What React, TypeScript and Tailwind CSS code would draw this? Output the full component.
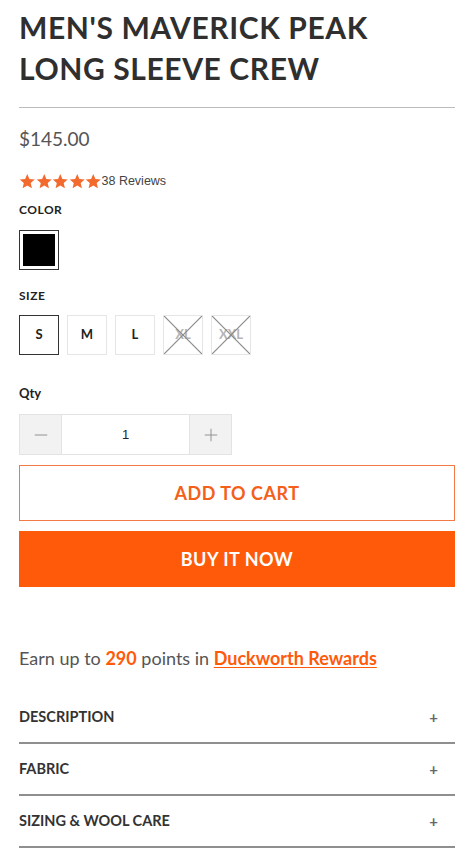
import { Minus, Plus } from 'lucide-react'

const sizes = [
  { label: 'S', selected: true, soldOut: false },
  { label: 'M', selected: false, soldOut: false },
  { label: 'L', selected: false, soldOut: false },
  { label: 'XL', selected: false, soldOut: true },
  { label: 'XXL', selected: false, soldOut: true },
]

const sections = ['DESCRIPTION', 'FABRIC', 'SIZING & WOOL CARE']

function Star() {
  return (
    <svg viewBox="0 0 24 24" className="w-[16.5px] h-[16.5px]" fill="#f26a2e">
      <path d="M12 1.5l3.1 7.2 7.8.7-5.9 5.1 1.8 7.6L12 18.1l-6.8 4 1.8-7.6-5.9-5.1 7.8-.7z" />
    </svg>
  )
}

export default function App() {
  return (
    <div className="w-[474px] min-h-[862px] bg-white px-[19px] font-['Lato',_sans-serif] text-[#333]">
      {/* Title */}
      <h1 className="pt-[7px] text-[30px] leading-[41px] font-bold tracking-[0.6px] text-[#2f2f2f]">
        MEN'S MAVERICK PEAK<br />LONG SLEEVE CREW
      </h1>
      <div className="mt-[18px] h-px bg-[#bdbdbd]" />

      {/* Price + reviews */}
      <p className="mt-[19px] text-[19px] leading-[24px] text-[#555]">$145.00</p>
      <div className="mt-[22px] flex items-center h-4">
        <div className="flex">
          <Star /><Star /><Star /><Star /><Star />
        </div>
        <span className="font-['Liberation_Sans',_sans-serif] text-[12.5px] text-[#444]">38 Reviews</span>
      </div>

      {/* Color */}
      <p className="mt-[13px] text-[12px] leading-4 font-bold tracking-[0.5px] text-[#222]">COLOR</p>
      <div className="mt-[12px] w-10 h-10 border border-[#333] p-[3px]">
        <div className="w-full h-full bg-black" />
      </div>

      {/* Size */}
      <p className="mt-[18px] text-[12px] leading-4 font-bold tracking-[0.5px] text-[#222]">SIZE</p>
      <div className="mt-[11px] flex gap-2">
        {sizes.map(s => (
          <div
            key={s.label}
            className={
              'relative min-w-10 h-10 px-1 flex items-center justify-center text-[13px] font-bold border ' +
              (s.selected ? 'border-[#333] text-[#222]' : 'border-[#e6e6e6] text-[#222]') +
              (s.soldOut ? ' text-[#b5b5b5]' : '')
            }
          >
            {s.label}
            {s.soldOut && (
              <svg className="absolute inset-0 w-full h-full" preserveAspectRatio="none" viewBox="0 0 40 40">
                <line x1="0" y1="0" x2="40" y2="40" stroke="#8c8c8c" strokeWidth="1.3" />
                <line x1="40" y1="0" x2="0" y2="40" stroke="#8c8c8c" strokeWidth="1.3" />
              </svg>
            )}
          </div>
        ))}
      </div>

      {/* Qty */}
      <p className="mt-[30px] text-[13px] leading-4 font-bold text-[#222]">Qty</p>
      <div className="mt-[13px] flex w-[213px] h-[41px] border border-[#e3e3e3]">
        <div className="w-[42px] flex items-center justify-center bg-[#f2f2f2] border-r border-[#e3e3e3]">
          <Minus className="w-5 h-5 text-[#8a8a8a]" strokeWidth={1.1} />
        </div>
        <div className="flex-1 flex items-center justify-center font-['Liberation_Sans',_sans-serif] text-[13px] text-[#222]">1</div>
        <div className="w-[42px] flex items-center justify-center bg-[#f2f2f2] border-l border-[#e3e3e3]">
          <Plus className="w-5 h-5 text-[#8a8a8a]" strokeWidth={1.1} />
        </div>
      </div>

      {/* Buttons */}
      <button className="mt-[10px] w-full h-[56px] border border-[#f47a45] text-[#f4601a] text-[18px] font-bold tracking-[0.5px]">
        ADD TO CART
      </button>
      <button className="mt-[10px] w-full h-[56px] bg-[#ff5a0a] text-white text-[18px] font-bold tracking-[0.5px]">
        BUY IT NOW
      </button>

      {/* Rewards */}
      <p className="mt-[59px] text-[18px] leading-6 text-[#555]">
        Earn up to <span className="font-bold text-[#ff5a0a]">290</span> points in{' '}
        <a className="font-bold text-[#ff5a0a] underline underline-offset-2">Duckworth Rewards</a>
      </p>

      {/* Accordion */}
      <div className="mt-[22px]">
        {sections.map(s => (
          <div key={s} className="h-[52px] flex items-center justify-between border-b-2 border-[#8f8f8f]">
            <span className="text-[14.5px] font-bold text-[#333]">{s}</span>
            <span className="mr-[17px] text-[15px] font-bold text-[#666]">+</span>
          </div>
        ))}
      </div>
    </div>
  )
}
